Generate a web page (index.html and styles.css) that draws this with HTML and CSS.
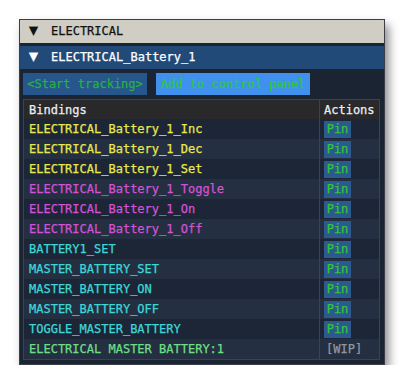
FILE: index.html
```html
<!DOCTYPE html>
<html lang="en">
<head>
    <meta charset="UTF-8">
    <title>ELECTRICAL</title>
    <link rel="stylesheet" href="styles.css">
</head>
<body>
    <div class="panel">
        <div class="section-head">
            <span class="arrow">&#9660;</span>ELECTRICAL
        </div>
        <div class="sub-head">
            <span class="arrow">&#9660;</span>ELECTRICAL_Battery_1
        </div>
        <div class="toolbar">
            <button class="btn-track">&lt;Start tracking&gt;</button>
            <button class="btn-add">Add to control panel</button>
        </div>
        <table class="bindings">
            <thead>
                <tr><th>Bindings</th><th class="col-actions">Actions</th></tr>
            </thead>
            <tbody>
                <tr class="yellow"><td>ELECTRICAL_Battery_1_Inc</td><td class="col-actions"><span class="pin">Pin</span></td></tr>
                <tr class="yellow"><td>ELECTRICAL_Battery_1_Dec</td><td class="col-actions"><span class="pin">Pin</span></td></tr>
                <tr class="yellow"><td>ELECTRICAL_Battery_1_Set</td><td class="col-actions"><span class="pin">Pin</span></td></tr>
                <tr class="magenta"><td>ELECTRICAL_Battery_1_Toggle</td><td class="col-actions"><span class="pin">Pin</span></td></tr>
                <tr class="magenta"><td>ELECTRICAL_Battery_1_On</td><td class="col-actions"><span class="pin">Pin</span></td></tr>
                <tr class="magenta"><td>ELECTRICAL_Battery_1_Off</td><td class="col-actions"><span class="pin">Pin</span></td></tr>
                <tr class="cyan"><td>BATTERY1_SET</td><td class="col-actions"><span class="pin">Pin</span></td></tr>
                <tr class="cyan"><td>MASTER_BATTERY_SET</td><td class="col-actions"><span class="pin">Pin</span></td></tr>
                <tr class="cyan"><td>MASTER_BATTERY_ON</td><td class="col-actions"><span class="pin">Pin</span></td></tr>
                <tr class="cyan"><td>MASTER_BATTERY_OFF</td><td class="col-actions"><span class="pin">Pin</span></td></tr>
                <tr class="cyan"><td>TOGGLE_MASTER_BATTERY</td><td class="col-actions"><span class="pin">Pin</span></td></tr>
                <tr class="green"><td>ELECTRICAL MASTER BATTERY:1</td><td class="col-actions"><span class="wip">[WIP]</span></td></tr>
            </tbody>
        </table>
    </div>
</body>
</html>
```

FILE: styles.css
```css
body {
    margin: 0;
    padding: 0;
    background: #ffffff;
    font-family: 'DejaVu Sans Mono', 'Liberation Mono', monospace;
    font-size: 12px;
    -webkit-text-stroke: 0.25px;
}

.panel {
    margin: 19px 0 0 19px;
    width: 364px;
    padding-bottom: 4px;
    background: #1b2433;
    border: 1px solid #3a3f48;
    box-shadow: 4px 6px 9px rgba(0, 0, 0, 0.45);
}

.section-head {
    height: 23px;
    line-height: 23px;
    background: #cfcdc4;
    color: #111111;
    margin-bottom: 3px;
}

.sub-head {
    height: 23px;
    line-height: 23px;
    background: #224a78;
    color: #ffffff;
}

.arrow {
    display: inline-block;
    width: 14px;
    margin: 0 8px 0 9px;
    font-size: 15px;
    line-height: 20px;
    vertical-align: top;
}

.toolbar {
    display: flex;
    gap: 9px;
    padding: 4px 3px 4px 3px;
}

.toolbar button {
    font-family: inherit;
    font-size: 12px;
    height: 22px;
    border: none;
    padding: 0 4px;
    cursor: pointer;
    -webkit-text-stroke: 0.25px;
}

.btn-track {
    width: 124px;
    background: #26568c;
    color: #25b145;
}

.btn-add {
    width: 154px;
    background: #4091ee;
    color: #2dc83e;
}

.bindings {
    margin-left: 3px;
    width: 357px;
    border-collapse: collapse;
    border: 1px solid #3b4350;
}

.bindings th {
    height: 19px;
    padding: 0 0 0 5px;
    text-align: left;
    font-weight: normal;
    color: #eeeeee;
    background: #29292b;
}

.bindings td {
    height: 20px;
    padding: 0 0 0 5px;
}

.bindings .col-actions {
    width: 55px;
    border-left: 1px solid #3b4350;
    padding-left: 4px;
}

.bindings tbody tr:nth-child(odd) {
    background: #1c2636;
}

.bindings tbody tr:nth-child(even) {
    background: #243041;
}

.yellow td { color: #e9e84e; }
.magenta td { color: #d352d6; }
.cyan td { color: #3fd6d8; }
.green td { color: #6fdf85; }

.pin {
    display: inline-block;
    width: 27px;
    height: 17px;
    line-height: 17px;
    text-align: center;
    background: #2c5a8f;
}

.bindings td .pin {
    color: #34c43a;
}

.bindings td .wip {
    color: #8f97a3;
    padding-left: 2px;
}
```
